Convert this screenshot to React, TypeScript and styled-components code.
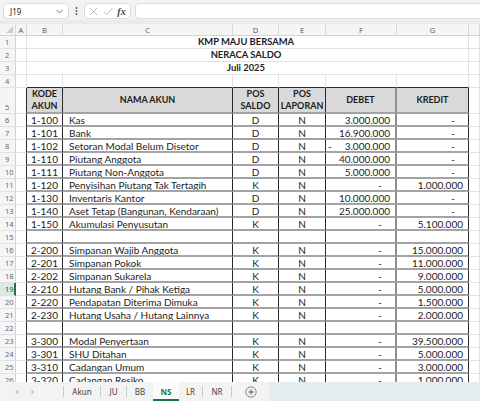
import * as React from "react";
import styled, { createGlobalStyle } from "styled-components";

const GlobalStyle = createGlobalStyle`
  html, body {
    margin: 0;
    padding: 0;
    background: #ffffff;
    overflow: hidden;
  }
  body {
    font-family: Lato, "Open Sans", sans-serif;
  }
`;

const COLS = "16px 11px 36px 170px 46px 47px 71px 72px 1fr";
const LIGHT = "#e1e1e1";
const DARK = "#2a2a2a";
const MID = "#a3a3a3";

const Window = styled.div`
  width: 480px;
  height: 401px;
  display: flex;
  flex-direction: column;
  background: #fff;
`;

const FormulaBar = styled.div`
  height: 24px;
  box-sizing: border-box;
  display: flex;
  align-items: flex-start;
  padding: 3px 0 0 3px;
  background: linear-gradient(#f3f3f3 0 20px, #e9ebe8 20px);
`;

const NameBox = styled.div`
  width: 66px;
  height: 16px;
  box-sizing: border-box;
  border: 1px solid #dcdcdc;
  border-radius: 4px;
  background: #fff;
  display: flex;
  align-items: center;
  justify-content: space-between;
  padding: 0 5px 0 6px;
  font-family: "Noto Sans", sans-serif;
  font-size: 8px;
  color: #222;
`;

const Grip = styled.div`
  width: 15px;
  height: 16px;
  display: flex;
  align-items: center;
  justify-content: center;
`;

const FxBox = styled.div`
  width: 47px;
  height: 16px;
  box-sizing: border-box;
  border: 1px solid #dcdcdc;
  border-radius: 4px;
  background: #fff;
  display: flex;
  align-items: center;
  justify-content: space-around;
  padding: 0 2px;
`;

const FxText = styled.span`
  font-family: "Liberation Serif", serif;
  font-style: italic;
  font-weight: bold;
  font-size: 10px;
  color: #444;
`;

const FormulaInput = styled.div`
  flex: 1;
  height: 16px;
  margin-left: 4px;
  box-sizing: border-box;
  border: 1px solid #dcdcdc;
  border-right: none;
  border-radius: 4px 0 0 4px;
  background: #fff;
`;

const Sheet = styled.div`
  flex: 1;
  overflow: hidden;
  display: flex;
  flex-direction: column;
`;

const Row = styled.div<{ $h?: number }>`
  display: grid;
  grid-template-columns: ${COLS};
  height: ${(p) => p.$h ?? 13}px;
  flex-shrink: 0;
`;

const ColHead = styled.div`
  box-sizing: border-box;
  background: #f5f5f5;
  border-right: 1px solid #dadada;
  border-bottom: 1px solid #d2d2d2;
  display: flex;
  align-items: center;
  justify-content: center;
  font-family: "Noto Sans", sans-serif;
  font-size: 7.5px;
  color: #5c5c5c;
`;

const Corner = styled(ColHead)`
  position: relative;
  &::after {
    content: "";
    position: absolute;
    right: 2px;
    bottom: 2px;
    border-style: solid;
    border-width: 0 0 7px 7px;
    border-color: transparent transparent #cdcdcd transparent;
  }
`;

const RowHead = styled.div<{ $active?: boolean }>`
  box-sizing: border-box;
  background: ${(p) => (p.$active ? "#dde8e0" : "#f5f5f5")};
  border-right: ${(p) => (p.$active ? "2px solid #1e7145" : "1px solid #d2d2d2")};
  border-bottom: 1px solid #e2e2e2;
  display: flex;
  align-items: flex-end;
  padding: 0 0 1px 5px;
  font-family: "Noto Sans", sans-serif;
  font-size: 7.5px;
  color: ${(p) => (p.$active ? "#1e5b3a" : "#6a6a6a")};
`;

type Align = "left" | "center" | "right" | "between";

const Cell = styled.div<{
  $r?: string;
  $b?: string;
  $rw?: number;
  $bw?: number;
  $align?: Align;
  $bg?: string;
  $bold?: boolean;
  $span?: string;
  $pl?: number;
  $pr?: number;
  $size?: number;
}>`
  box-sizing: border-box;
  grid-column: ${(p) => p.$span ?? "auto"};
  border-right: ${(p) => p.$rw ?? 1}px solid ${(p) => p.$r ?? LIGHT};
  border-bottom: ${(p) => p.$bw ?? 1}px solid ${(p) => p.$b ?? LIGHT};
  background: ${(p) => p.$bg ?? "#fff"};
  display: flex;
  align-items: center;
  justify-content: ${(p) =>
    p.$align === "center"
      ? "center"
      : p.$align === "right"
      ? "flex-end"
      : p.$align === "between"
      ? "space-between"
      : "flex-start"};
  padding: 0 ${(p) => p.$pr ?? 0}px 0 ${(p) => p.$pl ?? 0}px;
  font-size: ${(p) => p.$size ?? 10}px;
  line-height: 12px;
  font-weight: ${(p) => (p.$bold ? 700 : 400)};
  color: #1c1c1c;
  white-space: nowrap;
  overflow: hidden;
`;

const HeadText = styled.div`
  text-align: center;
  line-height: 12px;
  font-size: 9px;
  font-weight: 700;
`;

const TabBar = styled.div`
  height: 19px;
  flex-shrink: 0;
  display: flex;
  align-items: stretch;
  background: #f3f3f3;
  font-family: "Noto Sans", sans-serif;
  font-size: 8px;
  color: #444;
`;

const TabNav = styled.div`
  width: 63px;
  display: flex;
  align-items: center;
  gap: 12px;
  padding-left: 15px;
  box-sizing: border-box;
`;

const Tab = styled.div<{ $w: number; $active?: boolean }>`
  width: ${(p) => p.$w}px;
  box-sizing: border-box;
  display: flex;
  align-items: center;
  justify-content: center;
  background: ${(p) => (p.$active ? "#fbfbfb" : "transparent")};
  color: ${(p) => (p.$active ? "#1e7145" : "#444")};
  font-weight: ${(p) => (p.$active ? 700 : 400)};
  border-bottom: 2px solid ${(p) => (p.$active ? "#1e7145" : "transparent")};
  padding-top: 1px;
`;

const TabSep = styled.div`
  width: 1px;
  margin: 4px 0;
  background: #c9c9c9;
`;

const AddSheet = styled.div`
  width: 37px;
  display: flex;
  align-items: center;
  justify-content: center;
`;

const ScrollArea = styled.div`
  flex: 1;
  background: #e3eded;
`;

type Rec = {
  n: number;
  kode: string;
  nama: string;
  pos: string;
  debet: string;
  kredit: string;
  neg?: boolean;
};

const rows: (Rec | number)[] = [
  { n: 6, kode: "1-100", nama: "Kas", pos: "D", debet: "3.000.000", kredit: "-" },
  { n: 7, kode: "1-101", nama: "Bank", pos: "D", debet: "16.900.000", kredit: "-" },
  { n: 8, kode: "1-102", nama: "Setoran Modal Belum Disetor", pos: "D", debet: "3.000.000", kredit: "-", neg: true },
  { n: 9, kode: "1-110", nama: "Piutang Anggota", pos: "D", debet: "40.000.000", kredit: "-" },
  { n: 10, kode: "1-111", nama: "Piutang Non-Anggota", pos: "D", debet: "5.000.000", kredit: "-" },
  { n: 11, kode: "1-120", nama: "Penyisihan Piutang Tak Tertagih", pos: "K", debet: "-", kredit: "1.000.000" },
  { n: 12, kode: "1-130", nama: "Inventaris Kantor", pos: "D", debet: "10.000.000", kredit: "-" },
  { n: 13, kode: "1-140", nama: "Aset Tetap (Bangunan, Kendaraan)", pos: "D", debet: "25.000.000", kredit: "-" },
  { n: 14, kode: "1-150", nama: "Akumulasi Penyusutan", pos: "K", debet: "-", kredit: "5.100.000" },
  15,
  { n: 16, kode: "2-200", nama: "Simpanan Wajib Anggota", pos: "K", debet: "-", kredit: "15.000.000" },
  { n: 17, kode: "2-201", nama: "Simpanan Pokok", pos: "K", debet: "-", kredit: "11.000.000" },
  { n: 18, kode: "2-202", nama: "Simpanan Sukarela", pos: "K", debet: "-", kredit: "9.000.000" },
  { n: 19, kode: "2-210", nama: "Hutang Bank / Pihak Ketiga", pos: "K", debet: "-", kredit: "5.000.000" },
  { n: 20, kode: "2-220", nama: "Pendapatan Diterima Dimuka", pos: "K", debet: "-", kredit: "1.500.000" },
  { n: 21, kode: "2-230", nama: "Hutang Usaha / Hutang Lainnya", pos: "K", debet: "-", kredit: "2.000.000" },
  22,
  { n: 23, kode: "3-300", nama: "Modal Penyertaan", pos: "K", debet: "-", kredit: "39.500.000" },
  { n: 24, kode: "3-301", nama: "SHU Ditahan", pos: "K", debet: "-", kredit: "5.000.000" },
  { n: 25, kode: "3-310", nama: "Cadangan Umum", pos: "K", debet: "-", kredit: "3.000.000" },
  { n: 26, kode: "3-320", nama: "Cadangan Resiko", pos: "K", debet: "-", kredit: "1.000.000" },
];

const ACTIVE_ROW = 19;

const Amount = ({ v, last }: { v: string; last?: boolean }) => (
  <Cell
    $r={last ? DARK : "#8f8f8f"}
    $rw={last ? 1 : 2}
    $b={MID}
    $bw={2}
    $align="right"
    $pr={v === "-" ? 13 : 5}
  >
    {v}
  </Cell>
);

const TableRow = ({ r }: { r: Rec | number }) => {
  if (typeof r === "number") {
    return (
      <Row>
        <RowHead>{r}</RowHead>
        <Cell $r={DARK} />
        <Cell $r={DARK} $b={MID} $bw={2} />
        <Cell $r={DARK} $b={MID} $bw={2} />
        <Cell $r={DARK} $b={MID} $bw={2} />
        <Cell $r={DARK} $b={MID} $bw={2} />
        <Cell $r="#8f8f8f" $rw={2} $b={MID} $bw={2} />
        <Cell $r={DARK} $b={MID} $bw={2} />
        <Cell />
      </Row>
    );
  }
  return (
    <Row>
      <RowHead $active={r.n === ACTIVE_ROW}>{r.n}</RowHead>
      <Cell $r={DARK} />
      <Cell $r={DARK} $b={MID} $bw={2} $align="center">
        {r.kode}
      </Cell>
      <Cell $r={DARK} $b={MID} $bw={2} $pl={6}>
        {r.nama}
      </Cell>
      <Cell $r={DARK} $b={MID} $bw={2} $align="center">
        {r.pos}
      </Cell>
      <Cell $r={DARK} $b={MID} $bw={2} $align="center">
        N
      </Cell>
      {r.neg ? (
        <Cell $r="#8f8f8f" $rw={2} $b={MID} $bw={2} $align="between" $pl={2} $pr={5}>
          <span>-</span>
          <span>{r.debet}</span>
        </Cell>
      ) : (
        <Amount v={r.debet} />
      )}
      <Amount v={r.kredit} last />
      <Cell />
    </Row>
  );
};

const Chevron = () => (
  <svg width="7" height="5" viewBox="0 0 7 5">
    <path d="M0.5 1 L3.5 4 L6.5 1" fill="none" stroke="#666" strokeWidth="0.9" />
  </svg>
);

const Cross = () => (
  <svg width="9" height="9" viewBox="0 0 9 9">
    <path d="M1 1 L8 8 M8 1 L1 8" stroke="#b8b8b8" strokeWidth="0.9" />
  </svg>
);

const Check = () => (
  <svg width="10" height="9" viewBox="0 0 10 9">
    <path d="M1 5 L3.8 7.8 L9 1.2" fill="none" stroke="#b8b8b8" strokeWidth="0.9" />
  </svg>
);

const Dots = () => (
  <svg width="3" height="10" viewBox="0 0 3 10">
    <circle cx="1.5" cy="2" r="0.9" fill="#555" />
    <circle cx="1.5" cy="5" r="0.9" fill="#555" />
    <circle cx="1.5" cy="8" r="0.9" fill="#555" />
  </svg>
);

const Arrow = ({ dir }: { dir: "l" | "r" }) => (
  <svg width="4" height="6" viewBox="0 0 4 6">
    <path d={dir === "l" ? "M3.5 0.5 L0.5 3 L3.5 5.5 Z" : "M0.5 0.5 L3.5 3 L0.5 5.5 Z"} fill="#c4c4c4" />
  </svg>
);

const Plus = () => (
  <svg width="12" height="12" viewBox="0 0 12 12">
    <circle cx="6" cy="6" r="5.2" fill="none" stroke="#7a7a7a" strokeWidth="0.9" />
    <path d="M6 3.3 V8.7 M3.3 6 H8.7" stroke="#555" strokeWidth="0.9" />
  </svg>
);

const letters = ["A", "B", "C", "D", "E", "F", "G", ""];
const titles = ["KMP MAJU BERSAMA", "NERACA SALDO", "Juli 2025"];

export default function App() {
  return (
    <Window>
      <GlobalStyle />
      <FormulaBar>
        <NameBox>
          <span>J19</span>
          <Chevron />
        </NameBox>
        <Grip>
          <Dots />
        </Grip>
        <FxBox>
          <Cross />
          <Check />
          <FxText>fx</FxText>
        </FxBox>
        <FormulaInput />
      </FormulaBar>

      <Sheet>
        <Row $h={12}>
          <Corner />
          {letters.map((l, i) => (
            <ColHead key={i}>{l}</ColHead>
          ))}
        </Row>

        {titles.map((t, i) => (
          <Row key={t}>
            <RowHead>{i + 1}</RowHead>
            <Cell />
            <Cell $span="3 / 9" $align="center" $bold $pr={3} $size={9.4}>
              {t}
            </Cell>
            <Cell />
          </Row>
        ))}

        <Row>
          <RowHead>4</RowHead>
          <Cell />
          {[0, 1, 2, 3, 4, 5].map((i) => (
            <Cell key={i} $b={DARK} />
          ))}
          <Cell />
        </Row>

        <Row $h={26}>
          <RowHead>5</RowHead>
          <Cell $r={DARK} />
          <Cell $r={DARK} $b={MID} $bw={2} $bg="#d9d9d9" $align="center">
            <HeadText>
              KODE
              <br />
              AKUN
            </HeadText>
          </Cell>
          <Cell $r={DARK} $b={MID} $bw={2} $bg="#d9d9d9" $align="center">
            <HeadText>NAMA AKUN</HeadText>
          </Cell>
          <Cell $r={DARK} $b={MID} $bw={2} $bg="#d9d9d9" $align="center">
            <HeadText>
              POS
              <br />
              SALDO
            </HeadText>
          </Cell>
          <Cell $r={DARK} $b={MID} $bw={2} $bg="#d9d9d9" $align="center">
            <HeadText>
              POS
              <br />
              LAPORAN
            </HeadText>
          </Cell>
          <Cell $r="#8f8f8f" $rw={2} $b={MID} $bw={2} $bg="#d9d9d9" $align="center">
            <HeadText>DEBET</HeadText>
          </Cell>
          <Cell $r={DARK} $b={MID} $bw={2} $bg="#d9d9d9" $align="center">
            <HeadText>KREDIT</HeadText>
          </Cell>
          <Cell />
        </Row>

        {rows.map((r, i) => (
          <TableRow key={i} r={r} />
        ))}
      </Sheet>

      <TabBar>
        <TabNav>
          <Arrow dir="l" />
          <Arrow dir="r" />
        </TabNav>
        <TabSep />
        <Tab $w={36}>Akun</Tab>
        <TabSep />
        <Tab $w={25}>JU</Tab>
        <TabSep />
        <Tab $w={26}>BB</Tab>
        <Tab $w={26} $active>
          NS
        </Tab>
        <Tab $w={23}>LR</Tab>
        <TabSep />
        <Tab $w={28}>NR</Tab>
        <TabSep />
        <AddSheet>
          <Plus />
        </AddSheet>
        <ScrollArea />
      </TabBar>
    </Window>
  );
}
